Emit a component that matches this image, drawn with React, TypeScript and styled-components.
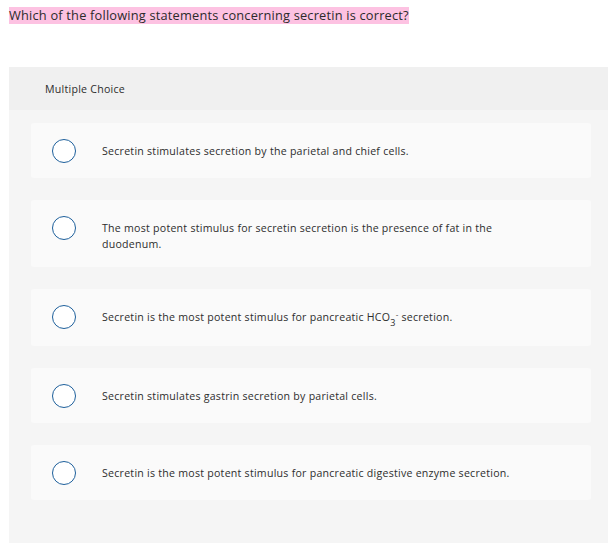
import React from "react";
import styled, { createGlobalStyle } from "styled-components";

const GlobalStyle = createGlobalStyle`
  html, body {
    margin: 0;
    padding: 0;
    background: #ffffff;
    overflow: hidden;
  }
  body {
    font-family: "Open Sans", "Liberation Sans", Arial, sans-serif;
    color: #2d2d2d;
  }
`;

const Page = styled.div`
  display: flex;
  flex-direction: column;
  align-items: flex-start;
  padding: 7px 0 0 9px;
  height: 536px;
`;

const Question = styled.span`
  background: #fdc2e2;
  font-size: 12.8px;
  letter-spacing: 0.2px;
  line-height: 17px;
  color: #2b2b2b;
`;

const Panel = styled.section`
  margin-top: 43px;
  width: 604px;
  min-height: 480px;
  background: #f5f5f5;
`;

const PanelHeader = styled.div`
  height: 43px;
  display: flex;
  align-items: center;
  padding-left: 36px;
  background: #f0f0f0;
  font-size: 10.6px;
  letter-spacing: 0.25px;
  color: #2d2d2d;
`;

const Choices = styled.div`
  display: flex;
  flex-direction: column;
  gap: 22px;
  padding: 13px 22px 40px 22px;
`;

const ChoiceCard = styled.label`
  display: flex;
  align-items: flex-start;
  gap: 26px;
  padding: 15px 20px 15px 21px;
  background: #fafafa;
  border-radius: 3px;
  cursor: pointer;
`;

const Radio = styled.span`
  flex: none;
  width: 22px;
  height: 22px;
  border: 1.5px solid #1d5f9b;
  border-radius: 50%;
  background: #ffffff;
  margin-top: 1px;
`;

const ChoiceText = styled.span`
  padding-top: 5px;
  font-size: 10.6px;
  letter-spacing: 0.25px;
  line-height: 16px;
  color: #2d2d2d;
  max-width: 425px;

  sub {
    font-size: 9px;
    vertical-align: -5px;
    line-height: 16px;
  }
  sup {
    font-size: 8px;
    vertical-align: 4px;
    line-height: 1;
  }
`;

const choices: React.ReactNode[] = [
  "Secretin stimulates secretion by the parietal and chief cells.",
  "The most potent stimulus for secretin secretion is the presence of fat in the duodenum.",
  <>
    Secretin is the most potent stimulus for pancreatic HCO<sub>3</sub>
    <sup>-</sup> secretion.
  </>,
  "Secretin stimulates gastrin secretion by parietal cells.",
  "Secretin is the most potent stimulus for pancreatic digestive enzyme secretion.",
];

export default function App() {
  return (
    <>
      <GlobalStyle />
      <Page>
        <Question>
          Which of the following statements concerning secretin is correct?
        </Question>
        <Panel>
          <PanelHeader>Multiple Choice</PanelHeader>
          <Choices>
            {choices.map((c, idx) => (
              <ChoiceCard key={idx}>
                <Radio />
                <ChoiceText>{c}</ChoiceText>
              </ChoiceCard>
            ))}
          </Choices>
        </Panel>
      </Page>
    </>
  );
}
